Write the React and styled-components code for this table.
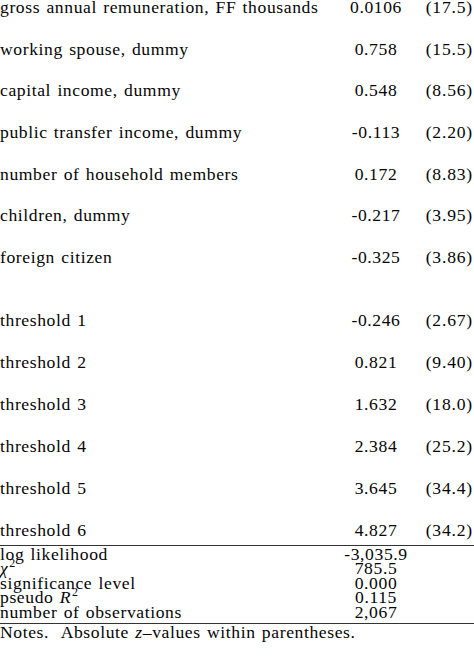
import React from "react";
import styled, { createGlobalStyle } from "styled-components";

const Sup = styled.sup`
  font-size: 0.68em;
  line-height: 0;
  vertical-align: 0.55em;
  font-style: normal;
  margin-left: 1px;
`;

// Ordered probit estimates, as printed in the paper
const coefficients = [
  { label: "gross annual remuneration, FF thousands", value: "0.0106", z: "(17.5)" },
  { label: "working spouse, dummy", value: "0.758", z: "(15.5)" },
  { label: "capital income, dummy", value: "0.548", z: "(8.56)" },
  { label: "public transfer income, dummy", value: "-0.113", z: "(2.20)" },
  { label: "number of household members", value: "0.172", z: "(8.83)" },
  { label: "children, dummy", value: "-0.217", z: "(3.95)" },
  { label: "foreign citizen", value: "-0.325", z: "(3.86)" }
];

const thresholds = [
  { label: "threshold 1", value: "-0.246", z: "(2.67)" },
  { label: "threshold 2", value: "0.821", z: "(9.40)" },
  { label: "threshold 3", value: "1.632", z: "(18.0)" },
  { label: "threshold 4", value: "2.384", z: "(25.2)" },
  { label: "threshold 5", value: "3.645", z: "(34.4)" },
  { label: "threshold 6", value: "4.827", z: "(34.2)" }
];

const getStats = () => [
  { label: "log likelihood", value: "-3,035.9" },
  {
    label: (
      <>
        <i>χ</i>
        <Sup>2</Sup>
      </>
    ),
    value: "785.5"
  },
  { label: "significance level", value: "0.000" },
  {
    label: (
      <>
        pseudo <i>R</i>
        <Sup>2</Sup>
      </>
    ),
    value: "0.115"
  },
  { label: "number of observations", value: "2,067" }
];

const App = () => {
  const stats = getStats();
  return (
    <>
      <GlobalStyle />
      <Page>
        <Section>
          {coefficients.map((row) => (
            <Row key={row.label} $height="41.7px">
              <Label>{row.label}</Label>
              <Value>{row.value}</Value>
              <ZValue>{row.z}</ZValue>
            </Row>
          ))}
        </Section>
        <Spacer />
        <Section>
          {thresholds.map((row, i) => (
            <Row
              key={row.label}
              $height={i === thresholds.length - 1 ? "22px" : "42px"}
            >
              <Label>{row.label}</Label>
              <Value>{row.value}</Value>
              <ZValue>{row.z}</ZValue>
            </Row>
          ))}
        </Section>
        <Stats>
          {stats.map((row) => (
            <Row key={row.value} $height="14.5px">
              <Label>{row.label}</Label>
              <Value>{row.value}</Value>
              <ZValue />
            </Row>
          ))}
        </Stats>
        <Notes>
          Notes.&nbsp; Absolute <i>z</i>–values within parentheses.
        </Notes>
      </Page>
    </>
  );
};

export default App;

const GlobalStyle = createGlobalStyle`
  html, body {
    margin: 0;
    padding: 0;
    background: #ffffff;
  }
  body {
    font-family: "Liberation Serif", "Times New Roman", serif;
    color: #050505;
    overflow: hidden;
  }
`;

const Page = styled.div`
  width: 474px;
  height: 669px;
  font-size: 17.6px;
  letter-spacing: 0.6px;
  word-spacing: 1.3px;
  line-height: 14.5px;
  box-sizing: border-box;
`;

const Section = styled.div`
  display: flex;
  flex-direction: column;
`;

const Spacer = styled.div`
  height: 20.9px;
`;

const Row = styled.div`
  display: grid;
  grid-template-columns: 1fr 80px 57px;
  height: ${(p) => p.$height};
  padding-right: 1px;
  align-items: start;
`;

const Label = styled.div`
  white-space: nowrap;
`;

const Value = styled.div`
  text-align: center;
  white-space: nowrap;
`;

const ZValue = styled.div`
  text-align: right;
  white-space: nowrap;
  letter-spacing: 0.8px;
`;

const Stats = styled.div`
  display: flex;
  flex-direction: column;
  border-top: 1px solid #333333;
  border-bottom: 1px solid #333333;
  padding-top: 0.8px;
  padding-bottom: 3.7px;
`;

const Notes = styled.div`
  padding-top: 1.5px;
  white-space: nowrap;
`;
